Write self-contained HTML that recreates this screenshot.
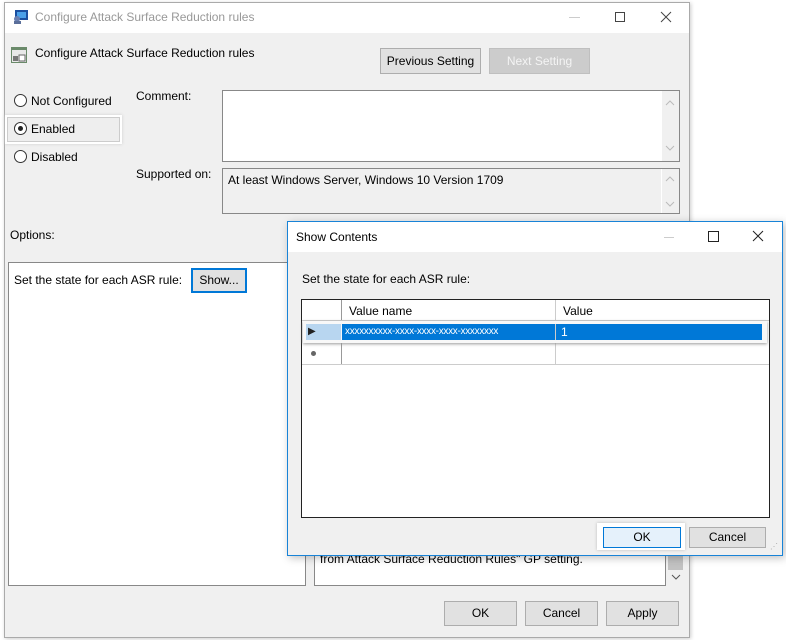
<!DOCTYPE html>
<html><head><style>
*{box-sizing:border-box;margin:0;padding:0}
body{width:786px;height:640px;background:#fff;font-family:"Liberation Sans",sans-serif;font-size:12px;color:#000;position:relative;overflow:hidden}
.a{position:absolute}
.btn{position:absolute;background:#e1e1e1;border:1px solid #adadad;text-align:center;font-size:12px}
.radio{position:absolute;width:13px;height:13px;border:1px solid #333;border-radius:50%;background:#fff}
</style></head><body>
<div class="a" style="left:4px;top:2px;width:686px;height:636px;background:#f0f0f0;border:1px solid #aaa;box-shadow:1px 1px 4px rgba(0,0,0,.2)"></div>
<div class="a" style="left:5px;top:3px;width:684px;height:30px;background:#fff"></div>
<svg class="a" style="left:12px;top:9px" width="18" height="16"><rect x="3" y="1" width="13" height="10" fill="#1a4fa0"/><rect x="5" y="3" width="9" height="6" fill="#4aa0e8"/><circle cx="5" cy="10" r="3" fill="#6a7fb0"/><rect x="2" y="12" width="7" height="3" fill="#5b6f9a"/></svg>
<div class="a" style="left:35px;top:10px;color:#999;font-size:12px">Configure Attack Surface Reduction rules</div>
<div class="a" style="left:569px;top:17px;width:11px;height:1px;background:#ccc"></div>
<div class="a" style="left:615px;top:12px;width:10px;height:10px;border:1px solid #444"></div>
<svg class="a" style="left:660px;top:11px" width="12" height="12"><path d="M1 1L11 11M11 1L1 11" stroke="#444" stroke-width="1"/></svg>
<svg class="a" style="left:11px;top:47px" width="16" height="16"><rect x="0" y="0" width="16" height="16" fill="#6a8a6a"/><rect x="1" y="3" width="14" height="12" fill="#e8e8e8"/><rect x="2" y="9" width="5" height="5" fill="#777"/><rect x="8" y="8" width="6" height="6" fill="#fff" stroke="#666"/></svg>
<div class="a" style="left:35px;top:46px">Configure Attack Surface Reduction rules</div>
<div class="btn" style="left:380px;top:48px;width:101px;height:26px;line-height:24px">Previous Setting</div>
<div class="btn" style="left:489px;top:48px;width:101px;height:26px;line-height:24px;background:#cccccc;border-color:#bfbfbf;color:#f4f4f4">Next Setting</div>
<div class="radio" style="left:14px;top:94px"></div><div class="a" style="left:31px;top:94px">Not Configured</div>
<div class="a" style="left:5px;top:115px;width:117px;height:29px;border:2px solid #fff;background:#eee;box-shadow:0 0 3px #ccc, inset 0 0 0 1px #ccc"></div>
<div class="radio" style="left:14px;top:122px"></div><div class="a" style="left:18px;top:126px;width:5px;height:5px;border-radius:50%;background:#222"></div><div class="a" style="left:31px;top:122px">Enabled</div>
<div class="radio" style="left:14px;top:150px"></div><div class="a" style="left:31px;top:150px">Disabled</div>
<div class="a" style="left:136px;top:89px">Comment:</div>
<div class="a" style="left:222px;top:90px;width:458px;height:72px;background:#fff;border:1px solid #888"></div>
<div class="a" style="left:662px;top:91px;width:17px;height:70px;background:#f0f0f0"></div>
<svg class="a" style="left:665px;top:96px" width="10" height="60"><path d="M1 9L5 5L9 9M1 50L5 54L9 50" stroke="#bbb" fill="none"/></svg>
<div class="a" style="left:136px;top:167px">Supported on:</div>
<div class="a" style="left:222px;top:168px;width:458px;height:46px;background:#f0f0f0;border:1px solid #888"></div>
<div class="a" style="left:661px;top:169px;width:1px;height:44px;background:#fff"></div>
<svg class="a" style="left:665px;top:174px" width="10" height="36"><path d="M1 7L5 3L9 7M1 28L5 32L9 28" stroke="#bbb" fill="none"/></svg>
<div class="a" style="left:228px;top:173px">At least Windows Server, Windows 10 Version 1709</div>
<div class="a" style="left:10px;top:228px">Options:</div>
<div class="a" style="left:8px;top:262px;width:298px;height:324px;background:#fff;border:1px solid #888"></div>
<div class="a" style="left:14px;top:273px">Set the state for each ASR rule:</div>
<div class="btn" style="left:191px;top:268px;width:56px;height:25px;line-height:21px;border:2px solid #0078d7">Show...</div>
<div class="a" style="left:314px;top:540px;width:352px;height:46px;background:#fff;border:1px solid #888"></div>
<div class="a" style="left:320px;top:552px">from Attack Surface Reduction Rules" GP setting.</div>
<div class="a" style="left:668px;top:556px;width:15px;height:14px;background:#c2c2c2"></div>
<svg class="a" style="left:671px;top:573px" width="10" height="8"><path d="M1 2L5 6L9 2" stroke="#555" fill="none"/></svg>
<div class="btn" style="left:444px;top:601px;width:73px;height:25px;line-height:23px">OK</div>
<div class="btn" style="left:525px;top:601px;width:73px;height:25px;line-height:23px">Cancel</div>
<div class="btn" style="left:606px;top:601px;width:73px;height:25px;line-height:23px">Apply</div>
<div class="a" style="left:287px;top:221px;width:496px;height:335px;background:#f0f0f0;border:1px solid #1883d7;box-shadow:2px 2px 8px rgba(0,0,0,.25)"></div>
<div class="a" style="left:288px;top:222px;width:494px;height:30px;background:#fff"></div>
<div class="a" style="left:296px;top:230px">Show Contents</div>
<div class="a" style="left:664px;top:237px;width:10px;height:1px;background:#ccc"></div>
<div class="a" style="left:708px;top:231px;width:11px;height:11px;border:1px solid #222"></div>
<svg class="a" style="left:752px;top:230px" width="12" height="12"><path d="M1 1L11 11M11 1L1 11" stroke="#222" stroke-width="1"/></svg>
<div class="a" style="left:302px;top:272px">Set the state for each ASR rule:</div>
<div class="a" style="left:301px;top:299px;width:469px;height:219px;background:#fff;border:1px solid #222"></div>
<div class="a" style="left:341px;top:300px;width:1px;height:64px;background:#999"></div>
<div class="a" style="left:555px;top:300px;width:1px;height:64px;background:#ccc"></div>
<div class="a" style="left:302px;top:320px;width:467px;height:1px;background:#ccc"></div>
<div class="a" style="left:349px;top:304px">Value name</div>
<div class="a" style="left:563px;top:304px">Value</div>
<div class="a" style="left:303px;top:321px;width:464px;height:22px;background:#f8f8f8;box-shadow:0 1px 3px #999"></div>
<div class="a" style="left:306px;top:324px;width:35px;height:16px;background:#b8d6f0"></div>
<div class="a" style="left:308px;top:326px;font-size:10px;color:#222">▶</div>
<div class="a" style="left:342px;top:324px;width:420px;height:16px;background:#0078d7"></div>
<div class="a" style="left:555px;top:324px;width:1px;height:16px;background:#ccc"></div>
<div class="a" style="left:345px;top:326px;color:#fff;font-size:10px;letter-spacing:-0.3px">xxxxxxxxxx-xxxx-xxxx-xxxx-xxxxxxxx</div>
<div class="a" style="left:561px;top:325px;color:#fff">1</div>
<div class="a" style="left:302px;top:364px;width:467px;height:1px;background:#ccc"></div>
<div class="a" style="left:311px;top:351px;width:5px;height:5px;border-radius:50%;background:#666"></div>
<div class="a" style="left:597px;top:523px;width:88px;height:27px;background:#fff;box-shadow:0 0 3px #bbb"></div>
<div class="btn" style="left:603px;top:527px;width:78px;height:21px;line-height:19px;background:#e5f1fb;border-color:#0078d7">OK</div>
<div class="btn" style="left:689px;top:527px;width:77px;height:21px;line-height:19px">Cancel</div>
<div class="a" style="left:770px;top:542px;font-size:8px;color:#aaa">⋰</div>
</body></html>
